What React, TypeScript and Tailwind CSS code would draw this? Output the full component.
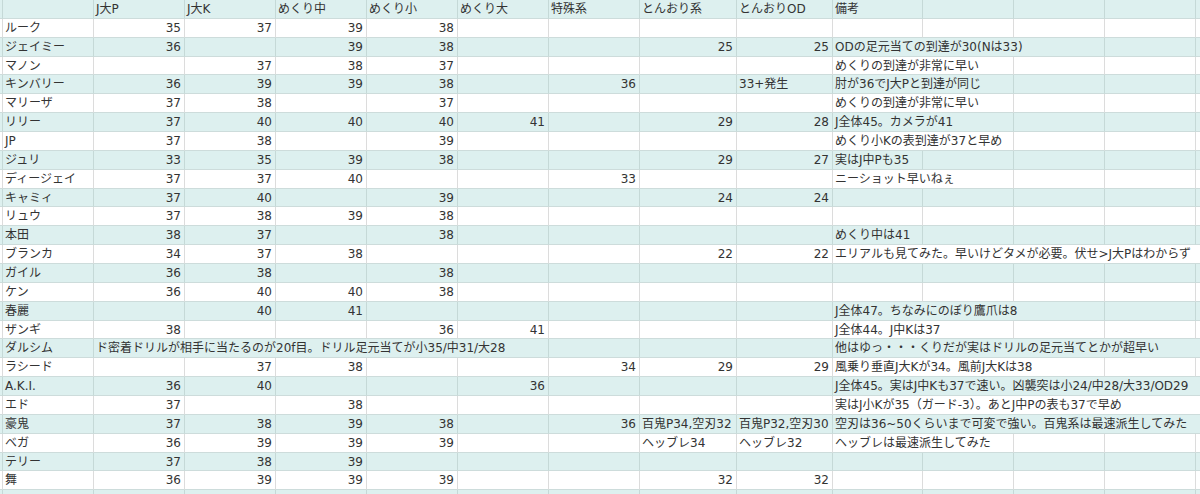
type Val = string | number | null

type Row = {
  name: string
  v?: Val[]
  note?: string
  span?: number
  long?: string
}

const headers = ["J大P", "J大K", "めくり中", "めくり小", "めくり大", "特殊系", "とんおり系", "とんおりOD"]

const rows: Row[] = [
  { name: "ルーク", v: [35, 37, 39, 38] },
  { name: "ジェイミー", v: [36, null, 39, 38, null, null, 25, 25], note: "ODの足元当ての到達が30(Nは33)", span: 3 },
  { name: "マノン", v: [null, 37, 38, 37], note: "めくりの到達が非常に早い", span: 2 },
  { name: "キンバリー", v: [36, 39, 39, 38, null, 36, null, "33+発生"], note: "肘が36でJ大Pと到達が同じ", span: 2 },
  { name: "マリーザ", v: [37, 38, null, 37], note: "めくりの到達が非常に早い", span: 2 },
  { name: "リリー", v: [37, 40, 40, 40, 41, null, 29, 28], note: "J全体45。カメラが41", span: 2 },
  { name: "JP", v: [37, 38, null, 39], note: "めくり小Kの表到達が37と早め", span: 2 },
  { name: "ジュリ", v: [33, 35, 39, 38, null, null, 29, 27], note: "実はJ中Pも35", span: 1 },
  { name: "ディージェイ", v: [37, 37, 40, null, null, 33], note: "ニーショット早いねぇ", span: 2 },
  { name: "キャミィ", v: [37, 40, null, 39, null, null, 24, 24] },
  { name: "リュウ", v: [37, 38, 39, 38] },
  { name: "本田", v: [38, 37, null, 38], note: "めくり中は41", span: 1 },
  { name: "ブランカ", v: [34, 37, 38, null, null, null, 22, 22], note: "エリアルも見てみた。早いけどタメが必要。伏せ>J大Pはわからず", span: 4 },
  { name: "ガイル", v: [36, 38, null, 38] },
  { name: "ケン", v: [36, 40, 40, 38] },
  { name: "春麗", v: [null, 40, 41], note: "J全体47。ちなみにのぼり鷹爪は8", span: 3 },
  { name: "ザンギ", v: [38, null, null, 36, 41], note: "J全体44。J中Kは37", span: 2 },
  { name: "ダルシム", long: "ド密着ドリルが相手に当たるのが20f目。ドリル足元当てが小35/中31/大28", note: "他はゆっ・・・くりだが実はドリルの足元当てとかが超早い", span: 4 },
  { name: "ラシード", v: [null, 37, 38, null, null, 34, 29, 29], note: "風乗り垂直J大Kが34。風前J大Kは38", span: 3 },
  { name: "A.K.I.", v: [36, 40, null, null, 36], note: "J全体45。実はJ中Kも37で速い。凶襲突は小24/中28/大33/OD29", span: 4 },
  { name: "エド", v: [37, null, 38], note: "実はJ小Kが35（ガード-3）。あとJ中Pの表も37で早め", span: 4 },
  { name: "豪鬼", v: [37, 38, 39, 38, null, 36, "百鬼P34,空刃32", "百鬼P32,空刃30"], note: "空刃は36~50くらいまで可変で強い。百鬼系は最速派生してみた", span: 4 },
  { name: "ベガ", v: [36, 39, 39, 39, null, null, "ヘッブレ34", "ヘッブレ32"], note: "ヘッブレは最速派生してみた", span: 2 },
  { name: "テリー", v: [37, 38, 39] },
  { name: "舞", v: [36, 39, 39, 39, null, null, 32, 32] },
]

const spanClass: Record<number, string> = {
  1: "col-span-1",
  2: "col-span-2",
  3: "col-span-3",
  4: "col-span-4",
  5: "col-span-5",
}

type Cell = { text: Val; span: number; right: boolean; edge?: boolean }

function buildCells(r: Row): Cell[] {
  const cells: Cell[] = [{ text: r.name, span: 1, right: false }]
  if (r.long) {
    cells.push({ text: r.long, span: 5, right: false })
    for (let i = 5; i < 8; i++) cells.push({ text: null, span: 1, right: false })
  } else {
    for (let i = 0; i < 8; i++) {
      const x = r.v?.[i] ?? null
      cells.push({ text: x, span: 1, right: typeof x === "number" })
    }
  }
  const span = r.note ? r.span || 1 : 0
  if (r.note) {
    if (span === 4) {
      cells.push({ text: r.note, span: 5, right: false, edge: true })
      return cells
    }
    cells.push({ text: r.note, span, right: false })
  }
  for (let i = span; i < 4; i++) cells.push({ text: null, span: 1, right: false })
  cells.push({ text: null, span: 1, right: false, edge: true })
  return cells
}

function GridRow({ cells, teal }: { cells: Cell[]; teal: boolean }) {
  const bg = teal ? "bg-[#ddf0ef]" : "bg-white"
  const vline = teal ? "border-[#c5d9d7]" : "border-[#dcdcdc]"
  return (
    <>
      <div className={`${bg} border-r border-b ${vline} border-b-[#cddcdb]`} />
      {cells.map((c, i) => (
        <div
          key={i}
          className={`${bg} ${spanClass[c.span]} border-b border-b-[#cddcdb] ${c.edge ? "" : `border-r ${vline}`} flex items-center whitespace-nowrap overflow-visible ${
            c.right ? "justify-end pr-[3px]" : "pl-[2px]"
          }`}
        >
          {c.text}
        </div>
      ))}
    </>
  )
}

export default function App() {
  const headerCells: Cell[] = [
    { text: null, span: 1, right: false },
    ...headers.map(h => ({ text: h, span: 1, right: false })),
    { text: "備考", span: 1, right: false },
    { text: null, span: 1, right: false },
    { text: null, span: 1, right: false },
    { text: null, span: 1, right: false },
    { text: null, span: 1, right: false, edge: true },
  ]
  const blank: Cell[] = [
    ...Array.from({ length: 13 }, () => ({ text: null, span: 1, right: false })),
    { text: null, span: 1, right: false, edge: true },
  ]

  return (
    <div className="w-[1200px] h-[494px] overflow-hidden bg-white text-[#333] text-[12px] font-['DejaVu_Sans','Noto_Sans_CJK_JP',sans-serif]">
      <div className="grid grid-cols-[3px_91px_91px_91px_91px_91px_91px_91px_97px_96px_90px_91px_91px_91px_1fr] auto-rows-[18.87px]">
        <GridRow cells={headerCells} teal />
        {rows.map((r, i) => (
          <GridRow key={r.name} cells={buildCells(r)} teal={i % 2 === 1} />
        ))}
        <GridRow cells={blank} teal />
      </div>
    </div>
  )
}
